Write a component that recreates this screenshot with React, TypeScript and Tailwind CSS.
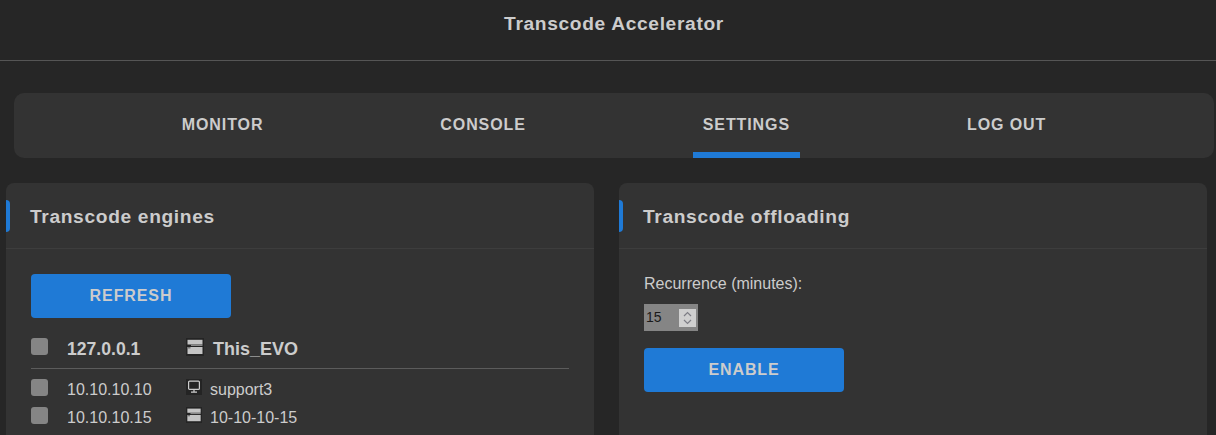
import React from "react";

function ServerIcon({ size }: { size: number }) {
  return (
    <svg width={size} height={size} viewBox="0 0 18 18" className="shrink-0">
      <rect width="18" height="18" fill="#242424" />
      <path d="M1.5 1.8h15v4.7H1.5z" fill="#c4c4c4" />
      <path d="M5 6.5h11.5v1.5H5z" fill="#8a8a8a" />
      <path d="M1.5 9h15v7h-15z" fill="#c4c4c4" />
      <path d="M1.5 9h3v1.5h-3z" fill="#777777" />
    </svg>
  );
}

function MonitorIcon() {
  return (
    <svg width="16" height="16" viewBox="0 0 16 16" className="shrink-0">
      <rect width="16" height="16" fill="#242424" />
      <rect x="2.6" y="2.1" width="10.8" height="8.3" rx="1" fill="none" stroke="#cccccc" strokeWidth="1.2" />
      <path d="M8 10.5v2.5M5 13.2h6" stroke="#cccccc" strokeWidth="1.2" fill="none" />
    </svg>
  );
}

function Checkbox() {
  return <div className="h-[17px] w-[17px] shrink-0 rounded-[3px] bg-[#858585]" />;
}

function Row({ ip, name, icon }: { ip: string; name: string; icon: React.ReactNode }) {
  return (
    <div className="flex h-[28px] items-start pt-[6px]">
      <Checkbox />
      <span className="ml-[19px] -mt-[1px] w-[119px] text-[16px] leading-[24px]">{ip}</span>
      <span className="w-[24px]">{icon}</span>
      <span className="-mt-[1px] text-[16px] leading-[24px]">{name}</span>
    </div>
  );
}

function Card({ title, children }: { title: string; children: React.ReactNode }) {
  return (
    <section className="relative h-[300px] rounded-t-[8px] bg-[#333333]">
      <div className="absolute left-0 top-[17px] h-[32px] w-[4px] rounded-r-[4px] bg-[#1f7ad6]" />
      <h2 className="flex h-[66px] items-center border-b border-[#3d3d3d] pl-[24px] pt-[4px] text-[19.2px] font-bold tracking-[0.65px]">
        {title}
      </h2>
      {children}
    </section>
  );
}

function PrimaryButton({ label }: { label: string }) {
  return (
    <button className="flex h-[44px] w-[200px] items-center justify-center rounded-[4px] bg-[#1f7ad6] text-[16px] font-bold tracking-[0.9px] text-[#cccccc]">
      {label}
    </button>
  );
}

export default function App() {
  const tabs = ["MONITOR", "CONSOLE", "SETTINGS", "LOG OUT"];
  return (
    <div className="h-[435px] overflow-hidden bg-[#262626] font-['Liberation_Sans',Arial,sans-serif] text-[#cccccc]">
      <header className="flex h-[61px] items-start justify-center border-b border-[#555555] pl-[12px] pt-[13px] text-[19.2px] font-bold leading-[21px] tracking-[0.65px]">
        Transcode Accelerator
      </header>

      <nav className="mx-[14px] mt-[32px] flex h-[65px] w-[1200px] justify-center gap-[157px] rounded-[10px] bg-[#333333]">
        {tabs.map((t) => (
          <div
            key={t}
            className={
              "flex items-center border-b-[6px] px-[10px] pt-[4px] text-[16px] font-bold tracking-[0.9px] " +
              (t === "SETTINGS" ? "border-[#1f7ad6]" : "border-transparent")
            }
          >
            {t}
          </div>
        ))}
      </nav>

      <main className="mt-[25px] grid grid-cols-[588px_588px] gap-[25px] px-[6px]">
        <Card title="Transcode engines">
          <div className="px-[25px] pt-[25px]">
            <PrimaryButton label="REFRESH" />
            <div className="mt-[11px] flex h-[40px] items-start border-b border-[#5c5c5c] pt-[9px]">
              <Checkbox />
              <span className="ml-[19px] mt-[1px] w-[119px] text-[17.6px] font-bold leading-[21px]">127.0.0.1</span>
              <span className="w-[27px]">
                <ServerIcon size={18} />
              </span>
              <span className="mt-[1px] text-[18px] font-bold leading-[21px]">This_EVO</span>
            </div>
            <div className="mt-[4px]">
              <Row ip="10.10.10.10" name="support3" icon={<MonitorIcon />} />
              <Row ip="10.10.10.15" name="10-10-10-15" icon={<ServerIcon size={16} />} />
            </div>
          </div>
        </Card>

        <Card title="Transcode offloading">
          <div className="px-[25px] pt-[25px]">
            <p className="text-[16px] leading-[20px]">Recurrence (minutes):</p>
            <div className="mt-[10px] flex h-[27px] w-[54px] items-center justify-between bg-[#858585] px-[2px] text-[14px] text-[#1a1a1a]">
              <span>15</span>
              <svg width="17" height="18" viewBox="0 0 17 18">
                <rect width="17" height="18" fill="#cfcfcf" />
                <path d="M5 7l3.5-3.5L12 7M5 11l3.5 3.5L12 11" fill="none" stroke="#7d7d85" strokeWidth="1.2" />
              </svg>
            </div>
            <div className="mt-[17px]">
              <PrimaryButton label="ENABLE" />
            </div>
          </div>
        </Card>
      </main>
    </div>
  );
}
